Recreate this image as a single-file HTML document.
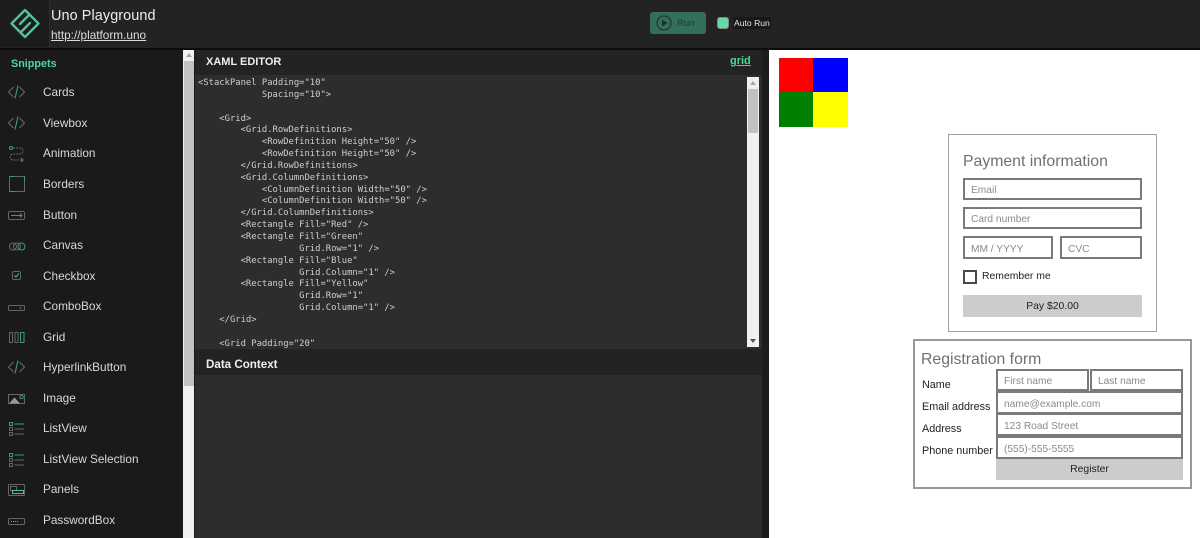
<!DOCTYPE html>
<html><head><meta charset="utf-8">
<style>
html,body{margin:0;padding:0;background:#fff}
#p{position:relative;width:1200px;height:538px;overflow:hidden;background:#fff;font-family:"Liberation Sans",sans-serif}
#p div,#p span.a,#p svg{position:absolute}
.t{white-space:nowrap}
.it{left:43px;color:#d8d8d8;font-size:11.8px;white-space:nowrap;line-height:16px}
.code{left:198px;top:78px;width:545px;height:271px;overflow:hidden;font:8.85px/11.85px "DejaVu Sans Mono",monospace;color:#cfcfcf;white-space:pre}
.inp{box-sizing:border-box;border:2px solid #7a7a7a;background:#fff;color:#8a8a8a;font-size:10.2px;white-space:nowrap;padding:2px 0 0 6px}
.lab{color:#222;font-size:10.8px;white-space:nowrap}
</style></head><body><div id="p">
<!-- header -->
<div style="left:0;top:0;width:1200px;height:48px;background:#232323"></div>
<div style="left:0;top:48px;width:1200px;height:2px;background:#0c0c0c"></div>
<div style="left:0;top:0;width:49px;height:47px;background:#1c1c1c;border-right:1px solid #2c2c2c"></div>
<svg style="left:0;top:0" width="50" height="48" viewBox="0 0 50 48" fill="none" stroke="#53c49a" stroke-width="2.300" stroke-linejoin="round" stroke-linecap="round"><path d="M25 10 L38.500 23.500 L25 37 L11.500 23.500 Z"/><path d="M20 24 L29.500 14.500M30 23 L20.500 32.500"/></svg>
<div class="t" style="left:51px;top:7px;color:#eee;font-size:14.4px;line-height:18px;letter-spacing:.1px">Uno Playground</div>
<div class="t" style="left:51px;top:27px;color:#ddd;font-size:11.8px;line-height:16px;text-decoration:underline">http://platform.uno</div>
<div style="left:650px;top:12px;width:56px;height:22px;background:#33705a;border-radius:3px"></div>
<svg style="left:656px;top:15px" width="16" height="16" viewBox="0 0 16 16" fill="none"><circle cx="8" cy="8" r="7" stroke="#1f2f28" stroke-width="1.100"/><path d="M6 4.500 L11.500 8 L6 11.500 Z" fill="#1f2f28"/></svg>
<div class="t" style="left:677px;top:18px;color:#1f3a2e;font-size:9.500px;line-height:12px">Run</div>
<div style="left:717px;top:17px;width:12px;height:12px;box-sizing:border-box;background:#62dba7;border:1.500px solid #888;border-radius:3px"></div>
<div class="t" style="left:733px;top:17px;color:#e6e6e6;font-size:8.600px;line-height:12px;background:#191919;padding:0 1px">Auto Run</div>
<!-- sidebar -->
<div style="left:0;top:50px;width:183px;height:488px;background:#1a1a1a"></div>
<div class="t" style="left:11px;top:57px;color:#4fd69c;font-size:10.800px;font-weight:bold;line-height:15px">Snippets</div>
<div style="left:183px;top:50px;width:11px;height:488px;background:#f0f0f0"></div>
<div style="left:184px;top:61px;width:10px;height:325px;background:#c1c1c1"></div>
<svg style="left:185px;top:52px" width="8" height="6"><path d="M4 1 L7 5 H1 Z" fill="#a5a5a5"/></svg>
<div style="left:194px;top:50px;width:1px;height:488px;background:#1c1c1c"></div>
<div class="it" style="top:84px">Cards</div>
<div class="it" style="top:115px">Viewbox</div>
<div class="it" style="top:145px">Animation</div>
<div class="it" style="top:176px">Borders</div>
<div class="it" style="top:207px">Button</div>
<div class="it" style="top:237px">Canvas</div>
<div class="it" style="top:268px">Checkbox</div>
<div class="it" style="top:298px">ComboBox</div>
<div class="it" style="top:329px">Grid</div>
<div class="it" style="top:359px">HyperlinkButton</div>
<div class="it" style="top:390px">Image</div>
<div class="it" style="top:420px">ListView</div>
<div class="it" style="top:451px">ListView Selection</div>
<div class="it" style="top:481px">Panels</div>
<div class="it" style="top:512px">PasswordBox</div>
<svg style="left:7px;top:83px" width="20" height="18" fill="none" stroke="#666" stroke-width="1.100"><path d="M6.500 4 L1.500 9 L6.500 14M12.500 4 L17.500 9 L12.500 14"/><path d="M11 2.500 L8 15.500" stroke="#3f9c78"/></svg>
<svg style="left:7px;top:114px" width="20" height="18" fill="none" stroke="#666" stroke-width="1.100"><path d="M6.500 4 L1.500 9 L6.500 14M12.500 4 L17.500 9 L12.500 14"/><path d="M11 2.500 L8 15.500" stroke="#3f9c78"/></svg>
<svg style="left:7px;top:144px" width="20" height="18" fill="none" stroke="#666" stroke-width="1.100"><circle cx="4" cy="4" r="1.500" stroke="#3f9c78"/><path d="M6 4 H13 A3 3 0 0 1 13 10 H6 A3 3 0 0 0 6 16 H15" stroke-dasharray="2 1"/><path d="M14 14 L16 16 L14 18" stroke="#3f9c78"/></svg>
<svg style="left:9px;top:176px" width="17" height="17" fill="none" stroke="#666"><rect x=".5" y=".5" width="15" height="15"/><path d="M.5 15.500 H6M.5 .5 H5M15.500 .5 V5" stroke="#3f9c78"/></svg>
<svg style="left:8px;top:210px" width="18" height="12" fill="none" stroke="#666"><rect x=".5" y="1.500" width="16" height="8" rx="1.500"/><path d="M3 5.500 H14M12 3.500 L14 5.500 L12 7.500" stroke="#3f9c78"/></svg>
<svg style="left:8px;top:240px" width="18" height="12" fill="none" stroke="#666"><circle cx="5" cy="6.500" r="3.500"/><circle cx="9" cy="6.500" r="3.500"/><circle cx="13.500" cy="6.500" r="3.500" stroke="#3f9c78"/></svg>
<svg style="left:12px;top:270px" width="10" height="11" fill="none" stroke="#666"><rect x=".5" y="1.500" width="8" height="8" rx="1.500"/><path d="M2.500 5.500 L4 7 L6.800 3.500" stroke="#4fc596"/></svg>
<svg style="left:8px;top:304px" width="18" height="9" fill="none" stroke="#666"><rect x=".5" y="1.500" width="16" height="5" rx="1"/><path d="M11 3.500 H14 L12.500 5 Z" fill="#3f9c78" stroke="none"/></svg>
<svg style="left:9px;top:331px" width="17" height="14" fill="none" stroke="#666"><rect x=".5" y="1.500" width="3" height="10"/><rect x="6" y="1.500" width="3" height="10"/><rect x="11.500" y="1.500" width="3.500" height="10" stroke="#3f9c78"/></svg>
<svg style="left:7px;top:358px" width="20" height="18" fill="none" stroke="#666" stroke-width="1.100"><path d="M6.500 4 L1.500 9 L6.500 14M12.500 4 L17.500 9 L12.500 14"/><path d="M11 2.500 L8 15.500" stroke="#3f9c78"/></svg>
<svg style="left:8px;top:394px" width="18" height="11" fill="none" stroke="#666"><rect x=".5" y=".5" width="16" height="9"/><path d="M1 9.500 L6.500 3.500 L12 9.500 Z" fill="#999" stroke="none"/><circle cx="13.500" cy="3" r="1.700" stroke="#3f9c78"/></svg>
<svg style="left:9px;top:422px" width="16" height="15" fill="none" stroke="#666"><rect x=".5" y=".5" width="3" height="3" stroke="#3f9c78"/><rect x=".5" y="5.500" width="3" height="3"/><rect x=".5" y="10.500" width="3" height="3"/><path d="M5.500 2 H15" stroke="#3f9c78"/><path d="M5.500 7 H15M5.500 12 H15"/></svg>
<svg style="left:9px;top:453px" width="16" height="15" fill="none" stroke="#666"><rect x=".5" y=".5" width="3" height="3" stroke="#3f9c78"/><rect x=".5" y="5.500" width="3" height="3"/><rect x=".5" y="10.500" width="3" height="3"/><path d="M5.500 2 H15" stroke="#3f9c78"/><path d="M5.500 7 H15M5.500 12 H15"/></svg>
<svg style="left:8px;top:484px" width="18" height="13" fill="none" stroke="#666"><rect x=".5" y=".5" width="16" height="11" rx="1"/><rect x="2.500" y="2.500" width="6" height="4"/><rect x="4.500" y="6.500" width="11" height="3" stroke="#4fc596"/></svg>
<svg style="left:8px;top:518px" width="18" height="9" fill="none" stroke="#666"><rect x=".5" y=".5" width="16" height="6" rx="1"/><path d="M3 3.500 H11" stroke="#4fc596" stroke-dasharray="1 1"/></svg>
<!-- editor -->
<div style="left:195px;top:50px;width:567px;height:25px;background:#232323"></div>
<div class="t" style="left:206px;top:55px;color:#eee;font-size:11px;font-weight:bold;line-height:15px">XAML EDITOR</div>
<div class="t" style="left:730px;top:54px;color:#4fd69c;font-size:11px;font-weight:bold;line-height:15px;text-decoration:underline">grid</div>
<div style="left:195px;top:75px;width:567px;height:274px;background:#2d2d2d"></div>
<div class="code">&lt;StackPanel Padding="10"
            Spacing="10"&gt;

    &lt;Grid&gt;
        &lt;Grid.RowDefinitions&gt;
            &lt;RowDefinition Height="50" /&gt;
            &lt;RowDefinition Height="50" /&gt;
        &lt;/Grid.RowDefinitions&gt;
        &lt;Grid.ColumnDefinitions&gt;
            &lt;ColumnDefinition Width="50" /&gt;
            &lt;ColumnDefinition Width="50" /&gt;
        &lt;/Grid.ColumnDefinitions&gt;
        &lt;Rectangle Fill="Red" /&gt;
        &lt;Rectangle Fill="Green"
                   Grid.Row="1" /&gt;
        &lt;Rectangle Fill="Blue"
                   Grid.Column="1" /&gt;
        &lt;Rectangle Fill="Yellow"
                   Grid.Row="1"
                   Grid.Column="1" /&gt;
    &lt;/Grid&gt;

    &lt;Grid Padding="20"</div>
<div style="left:747px;top:77px;width:12px;height:270px;background:#f0f0f0"></div>
<div style="left:748px;top:89px;width:10px;height:44px;background:#c1c1c1"></div>
<svg style="left:749px;top:80px" width="8" height="6"><path d="M4 1 L7 5 H1 Z" fill="#a5a5a5"/></svg>
<svg style="left:749px;top:338px" width="8" height="6"><path d="M1 1 H7 L4 5 Z" fill="#555"/></svg>
<div style="left:195px;top:349px;width:567px;height:26px;background:#232323"></div>
<div class="t" style="left:206px;top:356.500px;color:#eee;font-size:11.600px;font-weight:bold;line-height:15px">Data Context</div>
<div style="left:195px;top:375px;width:567px;height:163px;background:#2d2d2d"></div>
<div style="left:762px;top:50px;width:7px;height:488px;background:#1c1c1c"></div>
<!-- preview -->
<div style="left:769px;top:50px;width:431px;height:488px;background:#fff"></div>
<div style="left:779px;top:58px;width:35px;height:35px;background:#f00"></div>
<div style="left:813px;top:58px;width:35px;height:35px;background:#00f"></div>
<div style="left:779px;top:92px;width:35px;height:35px;background:#008000"></div>
<div style="left:813px;top:92px;width:35px;height:35px;background:#ff0"></div>
<!-- payment -->
<div style="left:948px;top:134px;width:209px;height:198px;box-sizing:border-box;border:1px solid #a0a0a0"></div>
<div class="t" style="left:963px;top:152px;color:#707070;font-size:15.800px;line-height:19px">Payment information</div>
<div class="inp" style="left:963px;top:178px;width:179px;height:22px;line-height:18px">Email</div>
<div class="inp" style="left:963px;top:207px;width:179px;height:22px;line-height:18px">Card number</div>
<div class="inp" style="left:963px;top:236px;width:90px;height:23px;line-height:19px">MM / YYYY</div>
<div class="inp" style="left:1060px;top:236px;width:82px;height:23px;line-height:19px">CVC</div>
<div style="left:963px;top:270px;width:14px;height:14px;box-sizing:border-box;border:2px solid #4a4a4a"></div>
<div class="lab t" style="left:982px;top:270px;font-size:10.400px;line-height:14px">Remember me</div>
<div style="left:963px;top:295px;width:179px;height:22px;background:#ccc;color:#222;font-size:10.400px;line-height:24px;text-align:center">Pay $20.00</div>
<!-- registration -->
<div style="left:913px;top:339px;width:279px;height:150px;box-sizing:border-box;border:2px solid #999"></div>
<div class="t" style="left:921px;top:350px;color:#707070;font-size:15.800px;line-height:19px">Registration form</div>
<div class="lab" style="left:922px;top:378px;line-height:14px">Name</div>
<div class="lab" style="left:922px;top:400px;line-height:14px">Email address</div>
<div class="lab" style="left:922px;top:422px;line-height:14px">Address</div>
<div class="lab" style="left:922px;top:444px;line-height:14px">Phone number</div>
<div class="inp" style="left:996px;top:369px;width:93px;height:22px;line-height:18px">First name</div>
<div class="inp" style="left:1090px;top:369px;width:93px;height:22px;line-height:18px">Last name</div>
<div class="inp" style="left:996px;top:391px;width:187px;height:23px;line-height:19px">name@example.com</div>
<div class="inp" style="left:996px;top:413px;width:187px;height:23px;line-height:19px">123 Road Street</div>
<div class="inp" style="left:996px;top:436px;width:187px;height:23px;line-height:19px">(555)-555-5555</div>
<div style="left:996px;top:459px;width:187px;height:21px;background:#ccc;color:#222;font-size:10.400px;line-height:22px;text-align:center">Register</div>
</div></body></html>
